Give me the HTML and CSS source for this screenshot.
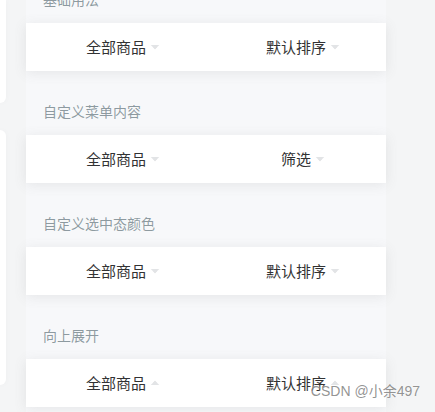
FILE: index.html
```html
<!DOCTYPE html>
<html lang="zh-CN">
<head>
<meta charset="utf-8">
<title>DropdownMenu 下拉菜单</title>
<link rel="stylesheet" href="styles.css">
</head>
<body>
<div class="layout">
  <aside class="side">
    <div class="side-card side-card--top"></div>
    <div class="side-card side-card--main"></div>
  </aside>

  <main class="demo">
    <section class="demo-block">
      <h2 class="demo-block__title">基础用法</h2>
      <div class="dropdown-menu">
        <div class="dropdown-menu__item"><span class="dropdown-menu__title">全部商品</span></div>
        <div class="dropdown-menu__item"><span class="dropdown-menu__title">默认排序</span></div>
      </div>
    </section>

    <section class="demo-block">
      <h2 class="demo-block__title">自定义菜单内容</h2>
      <div class="dropdown-menu">
        <div class="dropdown-menu__item"><span class="dropdown-menu__title">全部商品</span></div>
        <div class="dropdown-menu__item"><span class="dropdown-menu__title">筛选</span></div>
      </div>
    </section>

    <section class="demo-block">
      <h2 class="demo-block__title">自定义选中态颜色</h2>
      <div class="dropdown-menu">
        <div class="dropdown-menu__item"><span class="dropdown-menu__title">全部商品</span></div>
        <div class="dropdown-menu__item"><span class="dropdown-menu__title">默认排序</span></div>
      </div>
    </section>

    <section class="demo-block">
      <h2 class="demo-block__title">向上展开</h2>
      <div class="dropdown-menu">
        <div class="dropdown-menu__item"><span class="dropdown-menu__title dropdown-menu__title--up">全部商品</span></div>
        <div class="dropdown-menu__item"><span class="dropdown-menu__title dropdown-menu__title--up">默认排序</span></div>
      </div>
    </section>
  </main>
</div>

<div class="watermark">CSDN @小余497</div>
</body>
</html>
```

FILE: styles.css
```css
html, body {
  margin: 0;
  height: 100%;
  overflow: hidden;
}

body {
  background: #f4f5f6;
  font-family: "Noto Sans CJK SC", "Noto Sans", sans-serif;
  color: #323233;
}

.layout {
  display: flex;
  gap: 20px;
  align-items: flex-start;
}

/* white cards of the neighbouring panel, only their right edge shows */
.side {
  width: 6px;
  display: flex;
  flex-direction: column;
  gap: 27px;
}

.side-card {
  background: #fff;
  box-shadow: 0 0 6px rgba(0, 0, 0, 0.03);
}

.side-card--top {
  height: 103px;
  border-radius: 0 0 10px 0;
}

.side-card--main {
  height: 255px;
  border-radius: 0 10px 10px 0;
}

/* demo column */
.demo {
  width: 360px;
  background: #f7f8fa;
  margin-top: -41px;
  padding-bottom: 20px;
}

.demo-block__title {
  margin: 0;
  padding: 32px 17px 16px;
  color: rgba(69, 90, 100, 0.6);
  font-weight: normal;
  font-size: 14px;
  line-height: 16px;
}

.dropdown-menu {
  display: flex;
  height: 48px;
  background: #fff;
  box-shadow: 0 2px 12px rgba(100, 101, 102, 0.12);
  position: relative;
}

.dropdown-menu__item {
  flex: 1;
  display: flex;
  align-items: center;
  justify-content: center;
  min-width: 0;
}

.dropdown-menu__title {
  position: relative;
  padding: 0 8px;
  font-size: 15px;
  line-height: 22px;
  color: #323233;
}

/* caret after the title */
.dropdown-menu__title::after {
  content: "";
  position: absolute;
  top: 50%;
  right: -4px;
  margin-top: -5px;
  border: 3px solid;
  border-color: transparent transparent #dcdee0 #dcdee0;
  transform: rotate(-45deg);
  opacity: 0.8;
}

.dropdown-menu__title--up::after {
  margin-top: -1px;
  transform: rotate(135deg);
}

.watermark {
  position: absolute;
  right: 15px;
  bottom: 12px;
  font-family: "Liberation Sans", "Noto Sans CJK SC", sans-serif;
  font-size: 14px;
  line-height: 18px;
  color: rgba(120, 120, 120, 0.8);
  text-shadow: 0 0 2px rgba(255, 255, 255, 0.8);
  white-space: nowrap;
}
```
